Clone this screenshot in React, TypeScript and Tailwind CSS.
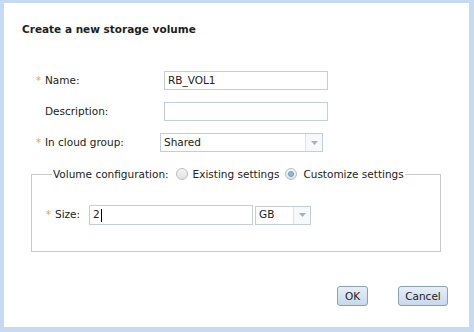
import React from 'react'

const font = { fontFamily: '"DejaVu Sans", Verdana, sans-serif' }

function Star() {
  return <span className="inline-block w-[9px] text-[#e8a040] text-[10px]">*</span>
}

function Radio({ checked }: { checked?: boolean }) {
  return (
    <span className="inline-flex items-center justify-center w-[12px] h-[12px] rounded-full border border-[#bcbcbc] bg-gradient-to-b from-[#f6f6f6] to-[#e2e2e2]">
      {checked && <span className="w-[6px] h-[6px] rounded-full bg-[#8fbadf] border border-[#6c9cc8]" />}
    </span>
  )
}

function Select({ value, w }: { value: string; w: string }) {
  return (
    <div className={`flex h-[19px] border border-[#c3cedc] bg-white ${w}`}>
      <div className="flex-1 flex items-center pl-[3px] text-[#222]">{value}</div>
      <div className="w-[17px] border-l border-[#dde3ea] bg-[#f7f8fa] flex items-center justify-center">
        <svg width="7" height="4" viewBox="0 0 7 4"><path d="M0 0h7L3.5 4z" fill="#a8b0b8" /></svg>
      </div>
    </div>
  )
}

export default function App() {
  return (
    <div style={font} className="w-[474px] h-[332px] bg-[#c6daf2] pt-[3px] pl-[4px] pr-[5px] pb-[5px] text-[10.5px] text-[#222]">
      <div className="w-full h-full bg-white flex flex-col">
        {/* Title */}
        <div className="pl-[18px] pt-[19px] leading-[14px] font-bold text-[#1e1e1e]">Create a new storage volume</div>

        {/* Fields */}
        <div className="flex flex-col gap-[12px] mt-[35px] pl-[32px]">
          <div className="flex items-center h-[19px]">
            <div className="w-[128px]"><Star />Name:</div>
            <div className="w-[164px] h-[19px] border border-[#c3cedc] flex items-center pl-[3px]">RB_VOL1</div>
          </div>
          <div className="flex items-center h-[19px]">
            <div className="w-[128px] pl-[9px]">Description:</div>
            <div className="w-[164px] h-[19px] border border-[#c3cedc]" />
          </div>
          <div className="flex items-center h-[19px]">
            <div className="w-[124px]"><Star />In cloud group:</div>
            <Select value="Shared" w="w-[163px]" />
          </div>
        </div>

        {/* Volume configuration */}
        <fieldset className="ml-[27px] mt-[15px] w-[410px] h-[85px] border border-[#c8c8c8] p-0">
          <legend className="ml-[20px] flex items-center gap-[6px] px-[1px] leading-[14px]">
            <span>Volume configuration:</span>
            <span className="flex items-center gap-[5px] ml-[1px]"><Radio />Existing settings</span>
            <span className="flex items-center gap-[6px]"><Radio checked />Customize settings</span>
          </legend>
          <div className="flex items-center mt-[24px] pl-[14px]">
            <div className="w-[43px]"><Star />Size:</div>
            <div className="w-[164px] h-[20px] border border-[#c3cedc] flex items-center pl-[3px]">
              2<span className="inline-block w-[1px] h-[13px] bg-black ml-[1px]" />
            </div>
            <div className="ml-[2px]"><Select value="GB" w="w-[56px]" /></div>
          </div>
        </fieldset>

        {/* Buttons */}
        <div className="flex justify-end gap-[30px] mt-[34px] pr-[21px]">
          <button className="w-[31px] h-[20px] rounded-[3px] border border-[#8e9fb4] bg-gradient-to-b from-[#e6eef8] to-[#c8d9ec] text-[#222] leading-none">OK</button>
          <button className="w-[50px] h-[20px] rounded-[3px] border border-[#8e9fb4] bg-gradient-to-b from-[#e6eef8] to-[#c8d9ec] text-[#222] leading-none">Cancel</button>
        </div>
      </div>
    </div>
  )
}
